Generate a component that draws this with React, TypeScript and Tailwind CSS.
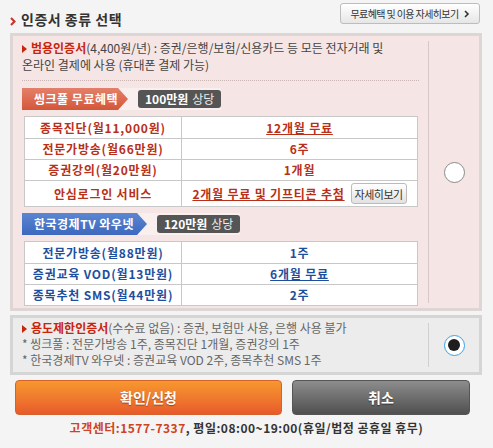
import React from "react";

const font = "font-['Noto_Sans_CJK_KR','Noto_Sans',sans-serif]";

function Tri() {
  return (
    <svg width="5" height="8" viewBox="0 0 5 8" className="inline-block mr-[4px] align-[0px]">
      <polygon points="0,0 5,4 0,8" fill="#c8250c" />
    </svg>
  );
}

function Radio({ checked }: { checked?: boolean }) {
  if (checked) {
    return (
      <div className="w-[21px] h-[21px] rounded-full border border-[#3aa0e8] bg-white flex items-center justify-center">
        <div className="w-[12px] h-[12px] rounded-full bg-[#1e1e1e]" />
      </div>
    );
  }
  return <div className="w-[21px] h-[21px] rounded-full border border-[#8a8a8a] bg-white" />;
}

function Banner({ label, badge, color, width }: { label: string; badge: string; color: string; width: string }) {
  return (
    <div className="flex w-fit items-center bg-[#f8efee] h-[22px]">
      <div
        className={`${color} ${width} h-[22px] flex items-center pl-[12px] text-white font-bold text-[12px] leading-none tracking-[0.5px] [clip-path:polygon(0_0,calc(100%-10px)_0,100%_50%,calc(100%-10px)_100%,0_100%)]`}
      >
        {label}
      </div>
      <div className="ml-[10px] h-[18px] px-[7px] rounded-[3px] bg-[#555] text-white text-[12px] flex items-center gap-[4px] leading-none">
        <span className="font-bold">{badge}</span>
        <span className="text-[#eee]">상당</span>
      </div>
    </div>
  );
}

type Row = { left: string; right: React.ReactNode; h: string };

function Table({ rows, color }: { rows: Row[]; color: string }) {
  return (
    <table className="w-[394px] border-collapse bg-white text-[12px] leading-[14px] font-bold tracking-[0.8px]">
      <tbody>
        {rows.map((r, i) => (
          <tr key={i}>
            <td className={`w-[157px] border border-[#c8c8c8] text-center p-0 ${r.h} ${color}`}>{r.left}</td>
            <td className={`border border-[#c8c8c8] text-center p-0 ${r.h} ${color}`}>{r.right}</td>
          </tr>
        ))}
      </tbody>
    </table>
  );
}

export default function App() {
  const think: Row[] = [
    { left: "종목진단(월11,000원)", right: <span className="underline">12개월 무료</span>, h: "h-[22px]" },
    { left: "전문가방송(월66만원)", right: "6주", h: "h-[21px]" },
    { left: "증권강의(월20만원)", right: "1개월", h: "h-[21px]" },
    {
      left: "안심로그인 서비스",
      right: (
        <div className="flex items-center justify-center gap-[6px]">
          <span className="underline">2개월 무료 및 기프티콘 추첨</span>
          <button className="h-[21px] w-[56px] rounded-[3px] border border-[#bbb] bg-gradient-to-b from-white to-[#e2e2e2] text-[11px] font-normal text-[#333] tracking-[-0.5px]">
            자세히보기
          </button>
        </div>
      ),
      h: "h-[26px]",
    },
  ];
  const wow: Row[] = [
    { left: "전문가방송(월88만원)", right: "1주", h: "h-[22px]" },
    { left: "증권교육 VOD(월13만원)", right: <span className="underline">6개월 무료</span>, h: "h-[21px]" },
    { left: "종목추천 SMS(월44만원)", right: "2주", h: "h-[21px]" },
  ];

  return (
    <div className={`${font} w-[493px] h-[448px] bg-[#f4f4f4] text-[#444] overflow-hidden`}>
      {/* title */}
      <div className="h-[33px] flex items-start justify-between pl-[10px] pr-[13px] pt-[3px]">
        <div className="flex items-center mt-[6px] gap-[5px]">
          <svg width="6" height="9" viewBox="0 0 6 9" className="mt-[3px]">
            <polyline points="1,1 4.5,4.5 1,8" fill="none" stroke="#c8302a" strokeWidth="2" />
          </svg>
          <span className="text-[14px] font-bold text-[#333] tracking-[0.5px]">인증서 종류 선택</span>
        </div>
        <button className="h-[21px] w-[140px] rounded-[3px] border border-[#bdbdbd] bg-gradient-to-b from-white to-[#e6e6e6] text-[10px] leading-none tracking-[-0.6px] whitespace-nowrap text-[#333] flex items-center justify-center gap-[5px]">
          무료혜택 및 이용 자세히보기
          <svg width="6" height="8" viewBox="0 0 6 8">
            <polyline points="1,1 4,4 1,7" fill="none" stroke="#333" strokeWidth="1.6" />
          </svg>
        </button>
      </div>

      {/* box 1 */}
      <div className="ml-[10px] w-[472px] border-[3px] border-[#ddd6d5] bg-[#f5e6e5] flex">
        <div className="flex-1 pl-[9px] pr-[9px] pt-[3px] pb-[2px]">
          <div className="text-[12px] leading-[17px] pb-[7px] border-b border-dotted border-[#c9b5b4]">
            <Tri />
            <span className="text-[#c8250c] font-bold">범용인증서</span>
            (4,400원/년) : 증권/은행/보험/신용카드 등 모든 전자거래 및
            <br />
            온라인 결제에 사용 (휴대폰 결제 가능)
          </div>
          <div className="mt-[7px]">
            <Banner label="씽크풀 무료혜택" badge="100만원" color="bg-gradient-to-b from-[#e4806a] to-[#d45638]" width="w-[106px]" />
          </div>
          <div className="mt-[6px] ml-[2px]">
            <Table rows={think} color="text-[#b8301a]" />
          </div>
          <div className="mt-[6px]">
            <Banner label="한국경제TV 와우넷" badge="120만원" color="bg-gradient-to-b from-[#5a86d2] to-[#3d68bd]" width="w-[125px]" />
          </div>
          <div className="mt-[6px] ml-[2px]">
            <Table rows={wow} color="text-[#1d4f9e]" />
          </div>
        </div>
        <div className="w-[51px] my-[5px] border-l border-[#d8c9c8] flex items-center justify-center">
          <Radio />
        </div>
      </div>

      {/* box 2 */}
      <div className="ml-[10px] mt-[4px] w-[472px] border-[3px] border-[#d5d5d5] bg-[#ececec] flex">
        <div className="flex-1 pl-[9px] pt-[2px] pb-[4px] text-[12px] leading-[16px] text-[#666]">
          <div>
            <Tri />
            <span className="text-[#c8250c] font-bold">용도제한인증서</span>
            (수수료 없음) : 증권, 보험만 사용, 은행 사용 불가
          </div>
          <div>* 씽크풀 : 전문가방송 1주, 종목진단 1개월, 증권강의 1주</div>
          <div>* 한국경제TV 와우넷 : 증권교육 VOD 2주, 종목추천 SMS 1주</div>
        </div>
        <div className="w-[51px] my-[5px] border-l border-[#d0d0d0] flex items-center justify-center">
          <Radio checked />
        </div>
      </div>

      {/* buttons */}
      <div className="flex gap-[10px] pl-[15px] mt-[5px]">
        <button className="w-[267px] h-[35px] rounded-[4px] border border-[#d8602a] bg-gradient-to-b from-[#f6982f] to-[#e85a2b] text-white font-bold text-[14px] [text-shadow:0_1px_1px_rgba(0,0,0,0.35)]">
          확인/신청
        </button>
        <button className="w-[178px] h-[35px] rounded-[4px] border border-[#555] bg-gradient-to-b from-[#8d8d8d] to-[#505050] text-white font-bold text-[14px] [text-shadow:0_1px_1px_rgba(0,0,0,0.5)]">
          취소
        </button>
      </div>

      {/* footer */}
      <div className="mt-[4px] text-center text-[12px] leading-[18px] font-bold text-[#333] tracking-[0.5px]">
        <span className="text-[#d04220]">고객센터:1577-7337</span>, 평일:08:00~19:00(휴일/법정 공휴일 휴무)
      </div>
    </div>
  );
}
